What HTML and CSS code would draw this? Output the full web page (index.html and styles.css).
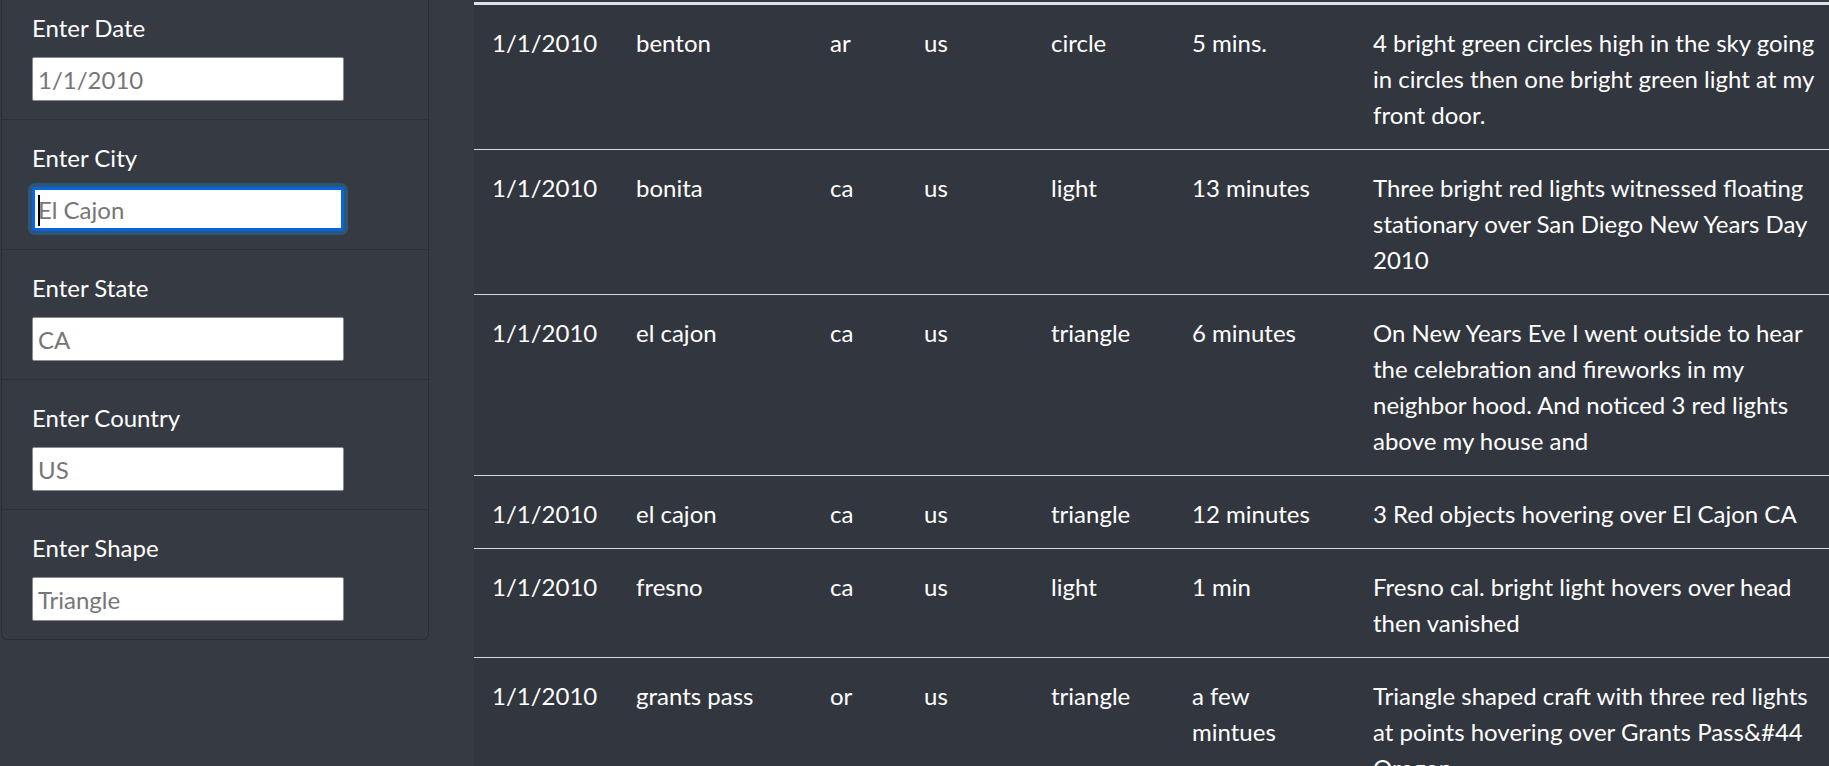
FILE: index.html
```html
<!DOCTYPE html>
<html lang="en">
<head>
<meta charset="utf-8">
<title>UFO Sightings</title>
<link rel="stylesheet" href="styles.css">
</head>
<body>
<div class="page">
  <aside class="sidebar">
    <ul class="filters">
      <li class="filter filter-first">
        <label class="filter-label" for="datetime">Enter Date</label>
        <input class="filter-input" id="datetime" type="text" placeholder="1/1/2010">
      </li>
      <li class="filter">
        <label class="filter-label" for="city">Enter City</label>
        <span class="input-wrap">
          <input class="filter-input is-focused" id="city" type="text" placeholder="El Cajon">
          <span class="caret"></span>
        </span>
      </li>
      <li class="filter">
        <label class="filter-label" for="state">Enter State</label>
        <input class="filter-input" id="state" type="text" placeholder="CA">
      </li>
      <li class="filter">
        <label class="filter-label" for="country">Enter Country</label>
        <input class="filter-input" id="country" type="text" placeholder="US">
      </li>
      <li class="filter">
        <label class="filter-label" for="shape">Enter Shape</label>
        <input class="filter-input" id="shape" type="text" placeholder="Triangle">
      </li>
    </ul>
  </aside>
  <main class="results">
    <table class="ufo-table">
      <colgroup>
        <col class="c-date"><col class="c-city"><col class="c-state"><col class="c-country"><col class="c-shape"><col class="c-duration"><col class="c-comment">
      </colgroup>
      <tbody>
        <tr>
          <td>1/1/2010</td><td>benton</td><td>ar</td><td>us</td><td>circle</td><td>5 mins.</td>
          <td class="comment">4 bright green circles high in the sky going<br>in circles then one bright green light at my<br>front door.</td>
        </tr>
        <tr>
          <td>1/1/2010</td><td>bonita</td><td>ca</td><td>us</td><td>light</td><td>13 minutes</td>
          <td class="comment">Three bright red lights witnessed floating<br>stationary over San Diego New Years Day<br>2010</td>
        </tr>
        <tr>
          <td>1/1/2010</td><td>el cajon</td><td>ca</td><td>us</td><td>triangle</td><td>6 minutes</td>
          <td class="comment">On New Years Eve I went outside to hear<br>the celebration and fireworks in my<br>neighbor hood. And noticed 3 red lights<br>above my house and</td>
        </tr>
        <tr>
          <td>1/1/2010</td><td>el cajon</td><td>ca</td><td>us</td><td>triangle</td><td>12 minutes</td>
          <td class="comment">3 Red objects hovering over El Cajon CA</td>
        </tr>
        <tr>
          <td>1/1/2010</td><td>fresno</td><td>ca</td><td>us</td><td>light</td><td>1 min</td>
          <td class="comment">Fresno cal. bright light hovers over head<br>then vanished</td>
        </tr>
        <tr>
          <td>1/1/2010</td><td>grants pass</td><td>or</td><td>us</td><td>triangle</td><td>a few<br>mintues</td>
          <td class="comment">Triangle shaped craft with three red lights<br>at points hovering over Grants Pass&amp;#44<br>Oregon</td>
        </tr>
      </tbody>
    </table>
  </main>
</div>
</body>
</html>
```

FILE: styles.css
```css
html, body {
  margin: 0;
  padding: 0;
}
body {
  width: 1829px;
  height: 766px;
  overflow: hidden;
  background: #363a42;
  color: #ffffff;
  font-family: "Segoe UI", Lato, "Open Sans", sans-serif;
  font-size: 24px;
  line-height: 36px;
}
.page {
  display: flex;
  align-items: flex-start;
  padding-left: 1px;
}
.sidebar {
  width: 428px;
  flex: 0 0 428px;
}
.filters {
  list-style: none;
  margin: 0;
  padding: 0;
  border: 1px solid #2b2f35;
  border-top: none;
  border-radius: 0 0 6px 6px;
  background: #363a42;
}
.filter {
  display: flex;
  flex-direction: column;
  align-items: flex-start;
  padding: 18px 30px 18px 30px;
  border-bottom: 1px solid #2d3137;
}
.filter:last-child {
  border-bottom: none;
}
.filter-first {
  padding-top: 8px;
}
.filter-label {
  display: block;
  padding-top: 2px;
  margin-bottom: 11px;
  line-height: 36px;
  color: #ffffff;
}
.filter-input {
  box-sizing: border-box;
  width: 312px;
  height: 44px;
  margin: 0;
  padding: 1px 5px;
  border: 1px solid #8a8a95;
  border-radius: 2px;
  background: #ffffff;
  color: #222;
  font-family: inherit;
  font-size: 24px;
  outline: none;
}
.filter-input::placeholder {
  color: #767676;
  opacity: 1;
}
.input-wrap {
  position: relative;
  display: block;
  width: 312px;
  height: 44px;
}
.filter-input.is-focused {
  border: 3px solid #0a64e2;
  border-radius: 3px;
  padding-left: 3px;
  box-shadow: 0 0 0 4px #2b5677;
}
.caret {
  position: absolute;
  left: 6px;
  top: 8px;
  width: 2px;
  height: 31px;
  background: #000000;
}
.results {
  margin-left: 45px;
  padding-top: 2px;
  flex: 0 0 auto;
}
.ufo-table {
  width: 1400px;
  table-layout: fixed;
  border-collapse: collapse;
  background: #32363e;
  border-top: 3px solid #dee2e6;
}
.c-date { width: 144px; }
.c-city { width: 194px; }
.c-state { width: 94px; }
.c-country { width: 127px; }
.c-shape { width: 141px; }
.c-duration { width: 181px; }
.c-comment { width: auto; }
.ufo-table td {
  padding: 20px 18px 16px 18px;
  vertical-align: top;
  border-top: 1px solid #d6d9dc;
  color: #ffffff;
  white-space: nowrap;
}
.ufo-table tr:first-child td {
  border-top: none;
}
```
